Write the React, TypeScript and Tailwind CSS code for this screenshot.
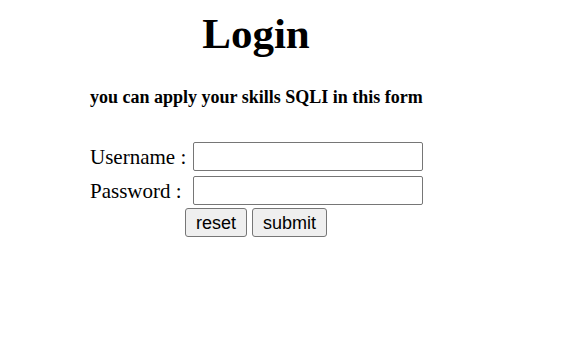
export default function App() {
  return (
    <div className="min-h-[361px] bg-white text-black">
      <div className="ml-[90px] w-[332px] flex flex-col font-['Liberation_Serif','Times_New_Roman',serif]">
        <h1 className="mt-[9px] text-center text-[43px] leading-[49px] font-bold">Login</h1>
        <h3 className="mt-[29px] text-[18px] leading-[21px] font-bold whitespace-nowrap">you can apply your skills SQLI in this form</h3>
        <div className="mt-[34px] flex flex-col">
          <div className="flex items-center h-[29px]">
            <label className="w-[103px] shrink-0 text-[21px] leading-[24px] whitespace-nowrap">Username :</label>
            <input type="text" className="w-[230px] shrink-0 h-[29px] border border-[#767676] rounded-[2px] bg-white" />
          </div>
          <div className="mt-[5px] flex items-center h-[29px]">
            <label className="w-[103px] shrink-0 text-[21px] leading-[24px] whitespace-nowrap">Password :</label>
            <input type="password" className="w-[230px] shrink-0 h-[29px] border border-[#767676] rounded-[2px] bg-white" />
          </div>
          <div className="mt-[3px] flex justify-center gap-[5px]">
            <button className="h-[29px] px-[10px] border border-[#767676] rounded-[3px] bg-[#efefef] text-[18px] leading-[20px] font-['Liberation_Sans',Arial,sans-serif]">reset</button>
            <button className="h-[29px] px-[10px] border border-[#767676] rounded-[3px] bg-[#efefef] text-[18px] leading-[20px] font-['Liberation_Sans',Arial,sans-serif]">submit</button>
          </div>
        </div>
      </div>
    </div>
  );
}
